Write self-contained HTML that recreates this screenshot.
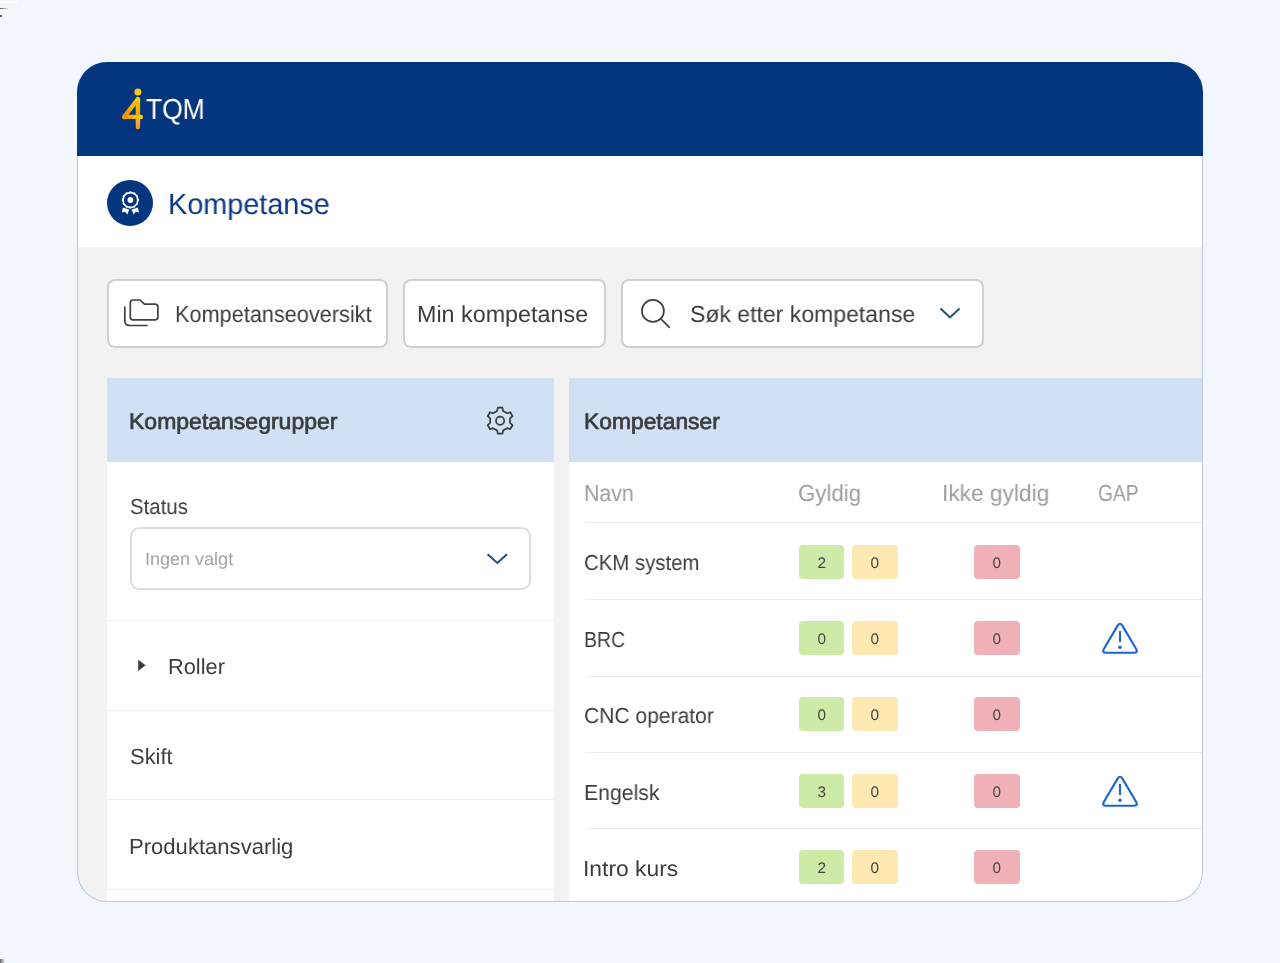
<!DOCTYPE html>
<html><head><meta charset="utf-8"><style>
html,body{margin:0;padding:0}
body{width:1280px;height:963px;overflow:hidden;background:#f2f6fd;position:relative;font-family:"Liberation Sans",sans-serif}
#card{position:absolute;left:0;top:0;width:1280px;height:963px;clip-path:inset(62px 77px 61px 77px round 30px)}
.b{position:absolute;box-sizing:border-box}
.t{position:absolute;white-space:nowrap;transform-origin:0 0;will-change:transform;text-rendering:geometricPrecision}
#txt{position:absolute;left:0;top:0;width:1280px;height:963px}
.badge{position:absolute;border-radius:4px;will-change:transform;text-rendering:geometricPrecision;font-size:15.3px;line-height:37.5px;text-align:center;color:#454545;font-family:"Liberation Sans",sans-serif}
#border{position:absolute;left:77px;top:156px;width:1126px;height:746px;box-sizing:border-box;border:1px solid #bccae0;border-top:none;border-radius:0 0 30px 30px}
</style></head><body>
<div id="card"><div class="b" style="left:77px;top:62px;width:1126.00px;height:94.00px;background:#04367f"></div><div class="b" style="left:77px;top:156px;width:1126.00px;height:91.00px;background:#ffffff"></div><div class="b" style="left:77px;top:247px;width:1126.00px;height:655.00px;background:#f2f2f2"></div><div class="b" style="left:107px;top:279px;width:281.00px;height:69.00px;background:#fff;border:2px solid #d0d0d0;border-radius:8px"></div><div class="b" style="left:403px;top:279px;width:203.00px;height:69.00px;background:#fff;border:2px solid #d0d0d0;border-radius:8px"></div><div class="b" style="left:621px;top:279px;width:363.00px;height:69.00px;background:#fff;border:2px solid #d0d0d0;border-radius:8px"></div><div class="b" style="left:107px;top:378px;width:447.00px;height:84.00px;background:#d1e0f5"></div><div class="b" style="left:107px;top:462px;width:447.00px;height:440.00px;background:#fff"></div><div class="b" style="left:569px;top:378px;width:634.00px;height:84.00px;background:#d1e0f5"></div><div class="b" style="left:569px;top:462px;width:634.00px;height:440.00px;background:#fff"></div><div class="b" style="left:107px;top:619.5px;width:447.00px;height:1.00px;background:#edf0f5"></div><div class="b" style="left:107px;top:709.5px;width:447.00px;height:1.00px;background:#edf0f5"></div><div class="b" style="left:107px;top:799.0px;width:447.00px;height:1.00px;background:#edf0f5"></div><div class="b" style="left:107px;top:889.0px;width:447.00px;height:1.00px;background:#edf0f5"></div><div class="b" style="left:585px;top:522px;width:618.00px;height:1.00px;background:#e7ebf2"></div><div class="b" style="left:585px;top:599px;width:618.00px;height:1.00px;background:#e7ebf2"></div><div class="b" style="left:585px;top:676px;width:618.00px;height:1.00px;background:#e7ebf2"></div><div class="b" style="left:585px;top:752px;width:618.00px;height:1.00px;background:#e7ebf2"></div><div class="b" style="left:585px;top:828px;width:618.00px;height:1.00px;background:#e7ebf2"></div><div class="b" style="left:130px;top:527px;width:401.00px;height:63.00px;background:#fff;border:2px solid #dedede;border-radius:9px"></div><div class="badge" style="left:798.6px;top:544.60px;width:45.40px;height:34px;background:#cdeba6">2</div><div class="badge" style="left:852.1px;top:544.60px;width:45.70px;height:34px;background:#fee9b3">0</div><div class="badge" style="left:974.4px;top:544.60px;width:45.70px;height:34px;background:#f0b2b8">0</div><div class="badge" style="left:798.6px;top:621.00px;width:45.40px;height:34px;background:#cdeba6">0</div><div class="badge" style="left:852.1px;top:621.00px;width:45.70px;height:34px;background:#fee9b3">0</div><div class="badge" style="left:974.4px;top:621.00px;width:45.70px;height:34px;background:#f0b2b8">0</div><div class="badge" style="left:798.6px;top:697.40px;width:45.40px;height:34px;background:#cdeba6">0</div><div class="badge" style="left:852.1px;top:697.40px;width:45.70px;height:34px;background:#fee9b3">0</div><div class="badge" style="left:974.4px;top:697.40px;width:45.70px;height:34px;background:#f0b2b8">0</div><div class="badge" style="left:798.6px;top:773.80px;width:45.40px;height:34px;background:#cdeba6">3</div><div class="badge" style="left:852.1px;top:773.80px;width:45.70px;height:34px;background:#fee9b3">0</div><div class="badge" style="left:974.4px;top:773.80px;width:45.70px;height:34px;background:#f0b2b8">0</div><div class="badge" style="left:798.6px;top:850.20px;width:45.40px;height:34px;background:#cdeba6">2</div><div class="badge" style="left:852.1px;top:850.20px;width:45.70px;height:34px;background:#fee9b3">0</div><div class="badge" style="left:974.4px;top:850.20px;width:45.70px;height:34px;background:#f0b2b8">0</div>
<svg class="b" style="left:115px;top:82px" width="40" height="52" viewBox="115 82 40 52">
<defs><linearGradient id="g4" gradientUnits="userSpaceOnUse" x1="138" y1="99" x2="124" y2="117"><stop offset="0" stop-color="#ffcc00"/><stop offset="1" stop-color="#f39000"/></linearGradient>
<linearGradient id="g6" gradientUnits="userSpaceOnUse" x1="124" y1="117" x2="141" y2="117"><stop offset="0" stop-color="#f39400"/><stop offset="1" stop-color="#ffcf00"/></linearGradient>
<linearGradient id="g7" gradientUnits="userSpaceOnUse" x1="138" y1="99" x2="138" y2="117"><stop offset="0" stop-color="#ffcc00"/><stop offset="1" stop-color="#f59a00"/></linearGradient>
<linearGradient id="g5" gradientUnits="userSpaceOnUse" x1="138" y1="118" x2="138" y2="129"><stop offset="0" stop-color="#f9b04a"/><stop offset="1" stop-color="#f39a1a"/></linearGradient></defs>
<g stroke-width="4.4" stroke-linecap="round" fill="none">
<line x1="137.9" y1="127" x2="137.9" y2="117" stroke="url(#g5)"/>
<line x1="137.9" y1="99.2" x2="137.9" y2="117" stroke="url(#g7)"/>
<line x1="137.9" y1="99.2" x2="124.2" y2="116.9" stroke="url(#g4)"/>
<line x1="124.2" y1="116.9" x2="140.9" y2="116.9" stroke="url(#g6)"/></g>
<circle cx="137.9" cy="92" r="3.5" fill="#ffc800"/></svg><svg class="b" style="left:107px;top:179.5px" width="46" height="46" viewBox="0 0 46 46">
<circle cx="23" cy="23" r="23" fill="#04367f"/>
<path d="M32.10 20.00 L32.02 20.45 L31.81 20.88 L31.54 21.29 L31.29 21.68 L31.13 22.07 L31.07 22.49 L31.09 22.95 L31.13 23.44 L31.09 23.92 L30.93 24.35 L30.64 24.70 L30.24 24.97 L29.81 25.19 L29.39 25.40 L29.06 25.66 L28.80 25.99 L28.59 26.41 L28.37 26.84 L28.10 27.24 L27.75 27.53 L27.32 27.69 L26.84 27.73 L26.35 27.69 L25.89 27.67 L25.47 27.73 L25.08 27.89 L24.69 28.14 L24.28 28.41 L23.85 28.62 L23.40 28.70 L22.95 28.62 L22.52 28.41 L22.11 28.14 L21.72 27.89 L21.33 27.73 L20.91 27.67 L20.45 27.69 L19.96 27.73 L19.48 27.69 L19.05 27.53 L18.70 27.24 L18.43 26.84 L18.21 26.41 L18.00 25.99 L17.74 25.66 L17.41 25.40 L16.99 25.19 L16.56 24.97 L16.16 24.70 L15.87 24.35 L15.71 23.92 L15.67 23.44 L15.71 22.95 L15.73 22.49 L15.67 22.07 L15.51 21.68 L15.26 21.29 L14.99 20.88 L14.78 20.45 L14.70 20.00 L14.78 19.55 L14.99 19.12 L15.26 18.71 L15.51 18.32 L15.67 17.93 L15.73 17.51 L15.71 17.05 L15.67 16.56 L15.71 16.08 L15.87 15.65 L16.16 15.30 L16.56 15.03 L16.99 14.81 L17.41 14.60 L17.74 14.34 L18.00 14.01 L18.21 13.59 L18.43 13.16 L18.70 12.76 L19.05 12.47 L19.48 12.31 L19.96 12.27 L20.45 12.31 L20.91 12.33 L21.33 12.27 L21.72 12.11 L22.11 11.86 L22.52 11.59 L22.95 11.38 L23.40 11.30 L23.85 11.38 L24.28 11.59 L24.69 11.86 L25.08 12.11 L25.47 12.27 L25.89 12.33 L26.35 12.31 L26.84 12.27 L27.32 12.31 L27.75 12.47 L28.10 12.76 L28.37 13.16 L28.59 13.59 L28.80 14.01 L29.06 14.34 L29.39 14.60 L29.81 14.81 L30.24 15.03 L30.64 15.30 L30.93 15.65 L31.09 16.08 L31.13 16.56 L31.09 17.05 L31.07 17.51 L31.13 17.93 L31.29 18.32 L31.54 18.71 L31.81 19.12 L32.02 19.55 Z M30.0 20 A6.6 6.6 0 1 0 16.8 20 A6.6 6.6 0 1 0 30.0 20 Z" fill="#fff" fill-rule="evenodd"/>
<circle cx="23.4" cy="20" r="2.9" fill="#fff"/>
<path d="M15.9 27.4 L22.2 29.6 L20.3 34.4 L18.1 31.8 L14.8 32.4 Z" fill="#fff"/>
<path d="M30.9 27.4 L24.6 29.6 L26.5 34.4 L28.7 31.8 L32.0 32.4 Z" fill="#fff"/>
</svg><svg class="b" style="left:118px;top:293px" width="45" height="40" viewBox="118 293 45 40">
<g fill="none" stroke="#404040" stroke-width="1.7" stroke-linecap="round" stroke-linejoin="round">
<path d="M133.2 300 H140.2 L144.4 304.1 H155 Q157.9 304.1 157.9 307 V317 Q157.9 319.9 155 319.9 H133.2 Q130.3 319.9 130.3 317 V303 Q130.3 300 133.2 300 Z"/>
<path d="M124.8 307.2 V320.8 Q124.8 325.5 129.5 325.5 H147"/>
</g></svg><svg class="b" style="left:635px;top:293px" width="45" height="40" viewBox="635 293 45 40">
<g fill="none" stroke="#404040" stroke-width="1.7" stroke-linecap="round">
<circle cx="652.9" cy="310.9" r="11"/><line x1="660.9" y1="318.9" x2="669.3" y2="327.4"/></g></svg><svg class="b" style="left:930px;top:300px" width="40" height="26" viewBox="930 300 40 26">
<polyline points="940.5,308.6 950,317.5 959.5,308.6" fill="none" stroke="#1f4f7e" stroke-width="2"/></svg><svg class="b" style="left:480px;top:545px" width="36" height="26" viewBox="480 545 36 26">
<polyline points="487.6,554.2 497.3,563 507,554.2" fill="none" stroke="#1f4f7e" stroke-width="2"/></svg><svg class="b" style="left:134px;top:655px" width="16" height="20" viewBox="134 655 16 20">
<path d="M138.2 659.8 L145.6 665.3 L138.2 670.9 Z" fill="#3d3d3d"/></svg><svg class="b" style="left:480px;top:400px" width="40" height="42" viewBox="480 400 40 42">
<g fill="none" stroke="#3a3a3a" stroke-width="1.7" stroke-linejoin="round"><path d="M497.12 410.95 L497.81 407.70 L502.39 407.70 L503.08 410.95 L507.06 413.24 L510.21 412.22 L512.50 416.19 L510.04 418.41 L510.04 422.99 L512.50 425.21 L510.21 429.18 L507.06 428.16 L503.08 430.45 L502.39 433.70 L497.81 433.70 L497.12 430.45 L493.14 428.16 L489.99 429.18 L487.70 425.21 L490.16 422.99 L490.16 418.41 L487.70 416.19 L489.99 412.22 L493.14 413.24 Z"/>
<circle cx="500.1" cy="420.7" r="4.1"/></g></svg><svg class="b" style="left:1095px;top:615.00px" width="50" height="45" viewBox="1095 615 50 45">
<g fill="none" stroke="#1b62d6" stroke-width="2.1" stroke-linecap="round" stroke-linejoin="round">
<path d="M1117.6 625.6 Q1120 621.8 1122.4 625.6 L1136.2 649 Q1138 652.8 1134 652.8 H1106 Q1102 652.8 1103.8 649 Z"/>
<line x1="1120" y1="631.9" x2="1120" y2="641.3"/></g><circle cx="1120" cy="647.2" r="1.7" fill="#1b62d6"/></svg><svg class="b" style="left:1095px;top:767.80px" width="50" height="45" viewBox="1095 615 50 45">
<g fill="none" stroke="#1b62d6" stroke-width="2.1" stroke-linecap="round" stroke-linejoin="round">
<path d="M1117.6 625.6 Q1120 621.8 1122.4 625.6 L1136.2 649 Q1138 652.8 1134 652.8 H1106 Q1102 652.8 1103.8 649 Z"/>
<line x1="1120" y1="631.9" x2="1120" y2="641.3"/></g><circle cx="1120" cy="647.2" r="1.7" fill="#1b62d6"/></svg>
<div id="txt"><div class="t" style="left:146.32px;top:93.00px;font-size:29.070px;line-height:34.884px;font-weight:400;color:#ffffff;transform:scaleX(0.9106)">TQM</div>
<div class="t" style="left:168.02px;top:188.00px;font-size:29.070px;line-height:34.884px;font-weight:400;color:#0b3a83;transform:scaleX(0.9915)">Kompetanse</div>
<div class="t" style="left:175.43px;top:301.00px;font-size:23.256px;line-height:27.907px;font-weight:400;color:#3d3d3d;transform:scaleX(0.9333)">Kompetanseoversikt</div>
<div class="t" style="left:417.49px;top:301.00px;font-size:23.256px;line-height:27.907px;font-weight:400;color:#3d3d3d;transform:scaleX(1.0030)">Min kompetanse</div>
<div class="t" style="left:689.51px;top:301.00px;font-size:23.256px;line-height:27.907px;font-weight:400;color:#3d3d3d;transform:scaleX(0.9900)">Søk etter kompetanse</div>
<div class="t" style="-webkit-text-stroke:0.7px #3c3c3c;left:128.71px;top:407.70px;font-size:22.529px;line-height:27.035px;font-weight:400;color:#3c3c3c;transform:scaleX(1.0216)">Kompetansegrupper</div>
<div class="t" style="-webkit-text-stroke:0.7px #3c3c3c;left:584.23px;top:407.70px;font-size:22.529px;line-height:27.035px;font-weight:400;color:#3c3c3c;transform:scaleX(1.0140)">Kompetanser</div>
<div class="t" style="left:129.66px;top:494.00px;font-size:21.802px;line-height:26.163px;font-weight:400;color:#3d3d3d;transform:scaleX(0.9367)">Status</div>
<div class="t" style="left:144.76px;top:549.20px;font-size:18.023px;line-height:21.628px;font-weight:400;color:#a3a3a3;transform:scaleX(0.9959)">Ingen valgt</div>
<div class="t" style="left:168.16px;top:653.80px;font-size:21.802px;line-height:26.163px;font-weight:400;color:#3d3d3d;transform:scaleX(0.9954)">Roller</div>
<div class="t" style="left:129.81px;top:743.60px;font-size:21.948px;line-height:26.337px;font-weight:400;color:#3d3d3d;transform:scaleX(0.9928)">Skift</div>
<div class="t" style="left:129.24px;top:833.50px;font-size:21.948px;line-height:26.337px;font-weight:400;color:#3d3d3d;transform:scaleX(1.0059)">Produktansvarlig</div>
<div class="t" style="left:584.17px;top:480.00px;font-size:23.256px;line-height:27.907px;font-weight:400;color:#9d9d9d;transform:scaleX(0.9163)">Navn</div>
<div class="t" style="left:797.70px;top:480.00px;font-size:23.256px;line-height:27.907px;font-weight:400;color:#9d9d9d;transform:scaleX(0.9565)">Gyldig</div>
<div class="t" style="left:941.90px;top:480.00px;font-size:23.256px;line-height:27.907px;font-weight:400;color:#9d9d9d;transform:scaleX(0.9764)">Ikke gyldig</div>
<div class="t" style="left:1098.27px;top:480.00px;font-size:23.256px;line-height:27.907px;font-weight:400;color:#9d9d9d;transform:scaleX(0.8280)">GAP</div>
<div class="t" style="left:584.37px;top:550.40px;font-size:21.802px;line-height:26.163px;font-weight:400;color:#3d3d3d;transform:scaleX(0.9347)">CKM system</div>
<div class="t" style="left:583.73px;top:626.80px;font-size:21.802px;line-height:26.163px;font-weight:400;color:#3d3d3d;transform:scaleX(0.8948)">BRC</div>
<div class="t" style="left:584.33px;top:703.20px;font-size:21.802px;line-height:26.163px;font-weight:400;color:#3d3d3d;transform:scaleX(0.9654)">CNC operator</div>
<div class="t" style="left:583.60px;top:779.60px;font-size:21.802px;line-height:26.163px;font-weight:400;color:#3d3d3d;transform:scaleX(0.9729)">Engelsk</div>
<div class="t" style="left:583.20px;top:856.00px;font-size:21.802px;line-height:26.163px;font-weight:400;color:#3d3d3d;transform:scaleX(1.0489)">Intro kurs</div></div>
</div>
<div id="border"></div>
<div style="position:absolute;left:0;top:1px;width:18px;height:2px;background:#fff"></div>
<div style="position:absolute;left:0;top:8px;width:9px;height:1px;background:linear-gradient(90deg,#555,rgba(85,85,85,0))"></div>
<div style="position:absolute;left:0;top:15px;width:2px;height:2px;background:#555"></div>
<div style="position:absolute;left:0;top:959px;width:5px;height:4px;background:linear-gradient(90deg,#666,rgba(102,102,102,0))"></div>
</body></html>
